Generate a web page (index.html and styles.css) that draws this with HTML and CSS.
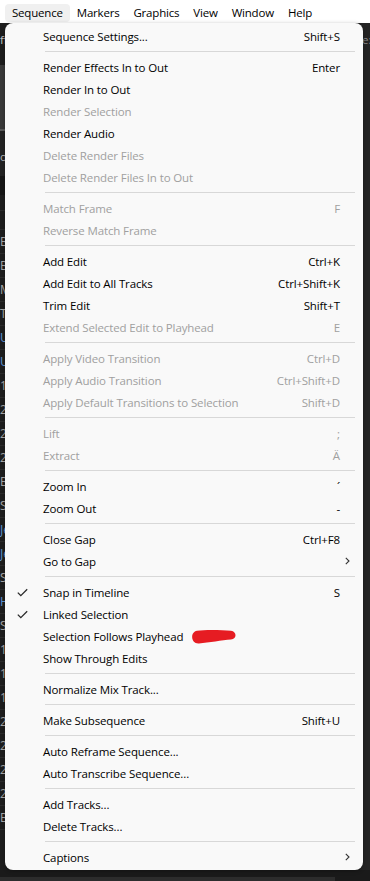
FILE: index.html
```html
<!DOCTYPE html>
<html lang="en">
  <head>
    <meta charset="UTF-8" />
    <meta name="viewport" content="width=device-width, initial-scale=1.0" />
    <title>Sequence menu</title>
    <link rel="stylesheet" href="styles.css">
  </head>
  <body>
    <div class="app">
      <nav class="menubar">
        <span class="menubar-item is-open">Sequence</span>
        <span class="menubar-item">Markers</span>
        <span class="menubar-item">Graphics</span>
        <span class="menubar-item">View</span>
        <span class="menubar-item">Window</span>
        <span class="menubar-item">Help</span>
      </nav>

      <main class="workspace">
        <aside class="left-panel">
          <div class="panel-tab">ff</div>
          <div class="panel-preview"></div>
          <div class="panel-info">o</div>
          <div class="panel-gap"></div>
          <div class="panel-head"></div>
          <div class="panel-head"></div>
          <ul class="bin-list">
            <li>B</li>
            <li>B</li>
            <li>M</li>
            <li>T</li>
            <li class="blue">U</li>
            <li class="blue">U</li>
            <li>1</li>
            <li>2</li>
            <li>2</li>
            <li>2</li>
            <li>B</li>
            <li>S</li>
            <li class="blue">Je</li>
            <li class="blue">Je</li>
            <li>S</li>
            <li class="blue">H</li>
            <li>S</li>
            <li>1</li>
            <li>1</li>
            <li>1</li>
            <li>2</li>
            <li>2</li>
            <li>2</li>
            <li>2</li>
            <li>B</li>
          </ul>
        </aside>
        <aside class="right-panel">
          <div class="panel-tab">e:</div>
        </aside>
      </main>
      <div class="statusbar"><div class="statusbar-fill"></div></div>

      <div class="dropdown">
        <div class="menu-item"><span></span><span class="label">Sequence Settings...</span><span class="key">Shift+S</span><span></span></div>
        <div class="sep"></div>
        <div class="menu-item"><span></span><span class="label">Render Effects In to Out</span><span class="key">Enter</span><span></span></div>
        <div class="menu-item"><span></span><span class="label">Render In to Out</span><span class="key"></span><span></span></div>
        <div class="menu-item disabled"><span></span><span class="label">Render Selection</span><span class="key"></span><span></span></div>
        <div class="menu-item"><span></span><span class="label">Render Audio</span><span class="key"></span><span></span></div>
        <div class="menu-item disabled"><span></span><span class="label">Delete Render Files</span><span class="key"></span><span></span></div>
        <div class="menu-item disabled"><span></span><span class="label">Delete Render Files In to Out</span><span class="key"></span><span></span></div>
        <div class="sep"></div>
        <div class="menu-item disabled"><span></span><span class="label">Match Frame</span><span class="key">F</span><span></span></div>
        <div class="menu-item disabled"><span></span><span class="label">Reverse Match Frame</span><span class="key"></span><span></span></div>
        <div class="sep"></div>
        <div class="menu-item"><span></span><span class="label">Add Edit</span><span class="key">Ctrl+K</span><span></span></div>
        <div class="menu-item"><span></span><span class="label">Add Edit to All Tracks</span><span class="key">Ctrl+Shift+K</span><span></span></div>
        <div class="menu-item"><span></span><span class="label">Trim Edit</span><span class="key">Shift+T</span><span></span></div>
        <div class="menu-item disabled"><span></span><span class="label">Extend Selected Edit to Playhead</span><span class="key">E</span><span></span></div>
        <div class="sep"></div>
        <div class="menu-item disabled"><span></span><span class="label">Apply Video Transition</span><span class="key">Ctrl+D</span><span></span></div>
        <div class="menu-item disabled"><span></span><span class="label">Apply Audio Transition</span><span class="key">Ctrl+Shift+D</span><span></span></div>
        <div class="menu-item disabled"><span></span><span class="label">Apply Default Transitions to Selection</span><span class="key">Shift+D</span><span></span></div>
        <div class="sep"></div>
        <div class="menu-item disabled"><span></span><span class="label">Lift</span><span class="key">;</span><span></span></div>
        <div class="menu-item disabled"><span></span><span class="label">Extract</span><span class="key">Ä</span><span></span></div>
        <div class="sep"></div>
        <div class="menu-item"><span></span><span class="label">Zoom In</span><span class="key">´</span><span></span></div>
        <div class="menu-item"><span></span><span class="label">Zoom Out</span><span class="key">-</span><span></span></div>
        <div class="sep"></div>
        <div class="menu-item"><span></span><span class="label">Close Gap</span><span class="key">Ctrl+F8</span><span></span></div>
        <div class="menu-item">
          <span></span><span class="label">Go to Gap</span><span class="key"></span>
          <svg class="arrow" width="5" height="8" viewBox="0 0 5 8"><path d="M0.8 0.8 L4 4 L0.8 7.2" fill="none" stroke="#333" stroke-width="1.1"/></svg>
        </div>
        <div class="sep"></div>
        <div class="menu-item">
          <svg class="check" width="11" height="9" viewBox="0 0 11 9"><path d="M0.8 4.6 L3.8 7.6 L10.2 1.2" fill="none" stroke="#2b2b2b" stroke-width="1.3"/></svg>
          <span class="label">Snap in Timeline</span><span class="key">S</span><span></span>
        </div>
        <div class="menu-item">
          <svg class="check" width="11" height="9" viewBox="0 0 11 9"><path d="M0.8 4.6 L3.8 7.6 L10.2 1.2" fill="none" stroke="#2b2b2b" stroke-width="1.3"/></svg>
          <span class="label">Linked Selection</span><span class="key"></span><span></span>
        </div>
        <div class="menu-item">
          <span></span>
          <span class="label">Selection Follows Playhead
            <svg class="scribble" width="46" height="14" viewBox="0 0 46 14"><path d="M6 0.8 C14 -0.4 31 0 40 0.8 C46 1.6 46 9 40 9.6 C31 10.4 18 12.6 8 13.4 C-0.5 14 -1 1.8 6 0.8 Z" fill="#e61c22"/></svg>
          </span>
          <span class="key"></span><span></span>
        </div>
        <div class="menu-item"><span></span><span class="label">Show Through Edits</span><span class="key"></span><span></span></div>
        <div class="sep"></div>
        <div class="menu-item"><span></span><span class="label">Normalize Mix Track...</span><span class="key"></span><span></span></div>
        <div class="sep"></div>
        <div class="menu-item"><span></span><span class="label">Make Subsequence</span><span class="key">Shift+U</span><span></span></div>
        <div class="sep"></div>
        <div class="menu-item"><span></span><span class="label">Auto Reframe Sequence...</span><span class="key"></span><span></span></div>
        <div class="menu-item"><span></span><span class="label">Auto Transcribe Sequence...</span><span class="key"></span><span></span></div>
        <div class="sep"></div>
        <div class="menu-item"><span></span><span class="label">Add Tracks...</span><span class="key"></span><span></span></div>
        <div class="menu-item"><span></span><span class="label">Delete Tracks...</span><span class="key"></span><span></span></div>
        <div class="sep"></div>
        <div class="menu-item">
          <span></span><span class="label">Captions</span><span class="key"></span>
          <svg class="arrow" width="5" height="8" viewBox="0 0 5 8"><path d="M0.8 0.8 L4 4 L0.8 7.2" fill="none" stroke="#333" stroke-width="1.1"/></svg>
        </div>
      </div>
    </div>
  </body>
</html>
```

FILE: styles.css
```css
html {
  box-sizing: border-box;
  font-family: 'Open Sans', 'Noto Sans', sans-serif;
  font-size: 11.5px;
}
*,
*::after,
*::before {
  box-sizing: inherit;
}

body {
  margin: 0;
  background-color: #1e1e1e;
  height: 881px;
  overflow: hidden;
}

.app {
  position: relative;
  height: 881px;
  display: flex;
  flex-direction: column;
}

/* top menu bar */
.menubar {
  height: 23px;
  background-color: #ffffff;
  display: flex;
  padding-left: 5px;
  flex-shrink: 0;
}

.menubar-item {
  margin-top: 4px;
  height: 18px;
  line-height: 18px;
  padding: 0 7px;
  color: #000;
  border-radius: 4px;
  letter-spacing: -0.2px;
}

.menubar-item.is-open {
  background-color: #f0f0f0;
}

/* dark app behind the menu */
.workspace {
  flex: 1;
  display: flex;
  justify-content: space-between;
  color: #b8b8b8;
}

.left-panel {
  width: 40px;
  display: flex;
  flex-direction: column;
}

.panel-tab {
  height: 42px;
  line-height: 34px;
  padding-left: 0;
  color: #c8c8c8;
}

.panel-preview {
  height: 66px;
  background-color: #3a3a3a;
  border-bottom: 2px solid #5a5a5a;
}

.panel-info {
  height: 45px;
  line-height: 52px;
  background-color: #232323;
}

.panel-gap {
  height: 19px;
  background-color: #161616;
}

.panel-head {
  height: 16px;
  border-bottom: 1px solid #2c2c2c;
}

.panel-head + .panel-head {
  height: 19px;
}

.bin-list {
  list-style: none;
  margin: 0;
  padding: 0;
}

.bin-list li {
  height: 24px;
  line-height: 23px;
  border-bottom: 1px solid #2c2c2c;
  color: #a9a9a9;
  font-size: 12px;
}

.bin-list li.blue {
  color: #5f95d4;
}

.right-panel {
  width: 10px;
  background-color: #242424;
}

.right-panel .panel-tab {
  height: 30px;
  line-height: 34px;
  color: #8a8a8a;
  padding-left: 2px;
}

.statusbar {
  height: 11px;
  flex-shrink: 0;
  padding-top: 7px;
  background-color: #1a1a1a;
}

.statusbar-fill {
  width: 335px;
  height: 4px;
  background-color: #2c2c2c;
}

/* dropdown menu */
.dropdown {
  position: absolute;
  top: 23px;
  left: 5px;
  width: 358px;
  padding: 2px 0;
  background-color: #f9f9f9;
  border-radius: 8px;
  box-shadow: 0 1px 4px rgba(0, 0, 0, 0.3);
  color: #000;
  letter-spacing: -0.12px;
}

.menu-item {
  display: grid;
  grid-template-columns: 38px 1fr auto 23px;
  align-items: center;
  height: 22px;
  white-space: nowrap;
}

.menu-item.disabled {
  color: #a0a0a0;
}

.menu-item .label {
  display: flex;
  align-items: center;
}

.check {
  margin-left: 12px;
}

.arrow {
  margin-left: 5px;
}

.scribble {
  margin-left: 8px;
  margin-top: 1px;
}

.sep {
  height: 9px;
  padding: 4px 8px 4px 40px;
}

.sep::after {
  content: '';
  display: block;
  height: 1px;
  background-color: #d8d8d8;
}
```
